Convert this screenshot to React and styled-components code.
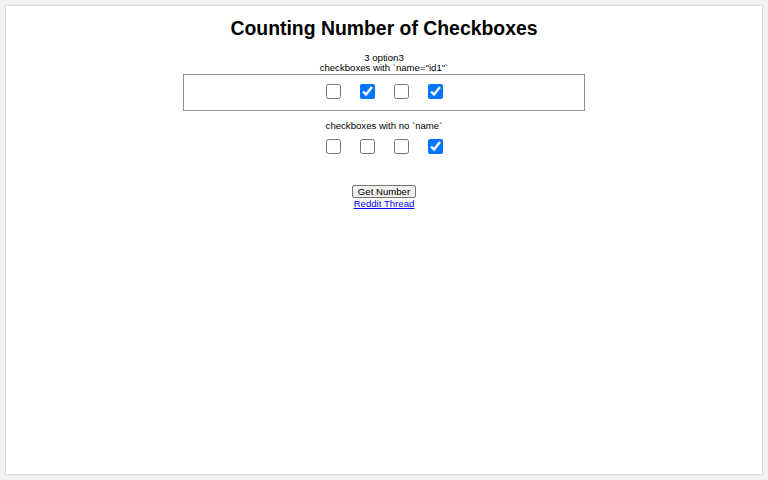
import React, { useState } from 'react'
import styled, { createGlobalStyle } from 'styled-components'

const GlobalStyle = createGlobalStyle`
  html, body {
    margin: 0;
    padding: 0;
    background: #f2f2f2;
    font-family: "Liberation Sans", Arial, sans-serif;
  }
`;

const Page = styled.div`
  padding: 5px;
  height: 480px;
  box-sizing: border-box;
`;

const Panel = styled.div`
  height: 470px;
  box-sizing: border-box;
  background: #fff;
  border: 1px solid #dcdcdc;
  display: flex;
  flex-direction: column;
  align-items: center;
`;

const Title = styled.h1`
  font-size: 19.4px;
  line-height: 23px;
  font-weight: bold;
  margin: 11px 0 13px;
  color: #000;
`;

const Label = styled.div`
  font-size: 9.6px;
  line-height: 10px;
  color: #000;
  text-align: center;
`;

const Group = styled.div`
  width: 402px;
  box-sizing: border-box;
  display: flex;
  justify-content: center;
  align-items: center;
  padding: ${p => (p.$boxed ? '9px 0 11px' : '8px 0')};
  border: ${p => (p.$boxed ? '1px solid #8f8f8f' : 'none')};
  margin: ${p => (p.$boxed ? '1px 0 10px' : '0')};
`;

const Check = styled.input.attrs({ type: 'checkbox' })`
  width: 15px;
  height: 15px;
  margin: 0 9.5px;
`;

const Button = styled.button`
  font-family: "Liberation Sans", Arial, sans-serif;
  font-size: 9.6px;
  line-height: 11px;
  padding: 0 5px;
  margin-top: 23px;
  background: #efefef;
  border: 1px solid #767676;
  border-radius: 2px;
  color: #000;
`;

const Link = styled.a`
  font-size: 9.6px;
  line-height: 11px;
  color: #0000ee;
  text-decoration: underline;
`;

const initialNamed = [false, true, false, true];
const initialPlain = [false, false, false, true];

export default function App() {
  const [named, setNamed] = useState(initialNamed);
  const [plain, setPlain] = useState(initialPlain);

  const toggle = (list, set, i) => set(list.map((v, j) => (j === i ? !v : v)));

  return (
    <Page>
      <GlobalStyle />
      <Panel>
        <Title>Counting Number of Checkboxes</Title>
        <Label>3 option3</Label>
        <Label>checkboxes with `name="id1"`</Label>
        <Group $boxed>
          {named.map((v, i) => (
            <Check key={i} name="id1" checked={v} onChange={() => toggle(named, setNamed, i)} />
          ))}
        </Group>
        <Label>checkboxes with no `name`</Label>
        <Group>
          {plain.map((v, i) => (
            <Check key={i} checked={v} onChange={() => toggle(plain, setPlain, i)} />
          ))}
        </Group>
        <Button>Get Number</Button>
        <Link href="#">Reddit Thread</Link>
      </Panel>
    </Page>
  )
}
